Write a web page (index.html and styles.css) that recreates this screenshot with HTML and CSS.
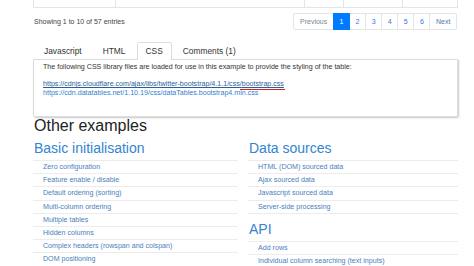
FILE: index.html
```html
<!DOCTYPE html>
<html lang="en">
<head>
  <meta charset="UTF-8">
  <meta name="viewport" content="width=device-width, initial-scale=1.0">
  <title>DataTables example - Bootstrap 4</title>
  <link rel="stylesheet" href="styles.css">
</head>
<body>
  <div class="page">
    <div class="table_tail">
      <div class="cell"></div>
      <div class="cell"></div>
      <div class="cell"></div>
      <div class="cell"></div>
      <div class="cell"></div>
    </div>

    <div class="info_row">
      <div class="info">Showing 1 to 10 of 57 entries</div>
      <ul class="pagination">
        <li class="disabled">Previous</li>
        <li class="active">1</li>
        <li>2</li>
        <li>3</li>
        <li>4</li>
        <li>5</li>
        <li>6</li>
        <li>Next</li>
      </ul>
    </div>

    <ul class="tabs">
      <li>Javascript</li>
      <li>HTML</li>
      <li class="active">CSS</li>
      <li>Comments (1)</li>
    </ul>
    <div class="tab_box">
      <p class="lead">The following CSS library files are loaded for use in this example to provide the styling of the table:</p>
      <ul class="libs">
        <li><a class="hover" href="#">https://cdnjs.cloudflare.com/ajax/libs/twitter-bootstrap/4.1.1/css/<span class="mark">bootstrap.css</span></a></li>
        <li><a href="#">https://cdn.datatables.net/1.10.19/css/dataTables.bootstrap4.min.css</a></li>
      </ul>
    </div>

    <h2 class="other">Other examples</h2>
    <div class="columns">
      <div class="col">
        <h3>Basic initialisation</h3>
        <ul class="links">
          <li>Zero configuration</li>
          <li>Feature enable / disable</li>
          <li>Default ordering (sorting)</li>
          <li>Multi-column ordering</li>
          <li>Multiple tables</li>
          <li>Hidden columns</li>
          <li>Complex headers (rowspan and colspan)</li>
          <li>DOM positioning</li>
        </ul>
      </div>
      <div class="col">
        <h3>Data sources</h3>
        <ul class="links">
          <li>HTML (DOM) sourced data</li>
          <li>Ajax sourced data</li>
          <li>Javascript sourced data</li>
          <li>Server-side processing</li>
        </ul>
        <h3 class="next">API</h3>
        <ul class="links">
          <li>Add rows</li>
          <li>Individual column searching (text inputs)</li>
        </ul>
      </div>
    </div>
  </div>
</body>
</html>
```

FILE: styles.css
```css
body {
  margin: 0;
  background: #fff;
  font-family: 'Liberation Sans', Arial, sans-serif;
  color: #333;
  overflow: hidden;
}

ul {margin: 0; padding: 0; list-style: none;}

.page {
  width: 425px;
  margin-left: 33px;
}

/* end of the table above */
.table_tail {
  display: grid;
  grid-template-columns: 82px 189px 39px 59px 1fr;
  height: 7px;
  border-bottom: 1px solid #e3e6e9;
}
.table_tail .cell {border-left: 1px solid #e3e6e9;}
.table_tail .cell:last-child {border-right: 1px solid #e3e6e9;}

.info_row {
  display: flex;
  justify-content: space-between;
  align-items: center;
  margin-top: 5px;
}
.info {font-size: 7px; color: #444; padding-left: 1px;}

.pagination {display: flex; padding-right: 1px;}
.pagination li {
  height: 15px;
  line-height: 15px;
  padding: 0 5.6px;
  font-size: 7px;
  color: #2a7de1;
  border: 1px solid #e3e6e9;
  margin-left: -1px;
}
.pagination li:first-child {border-radius: 2px 0 0 2px;}
.pagination li:last-child {border-radius: 0 2px 2px 0; color: #4f78a8;}
.pagination li.disabled {color: #7d8790;}
.pagination li.active {background: #007bff; border-color: #007bff; color: #fff; position: relative;}

.tabs {
  display: flex;
  margin: 12px 0 0 1px;
  padding-left: 0;
}
.tabs li {
  height: 17px;
  line-height: 17px;
  padding: 0 9px;
  margin-right: 1px;
  font-size: 8.4px;
  color: #333;
  border: 1px solid transparent;
  border-bottom: 0;
  box-sizing: border-box;
}
.tabs li.active {
  padding: 0 8px;
  border-color: #ddd;
  border-radius: 2px 2px 0 0;
  background: #fff;
  position: relative;
  height: 18px;
  margin-bottom: -1px;
  z-index: 1;
}

.tab_box {
  height: 58px;
  box-sizing: border-box;
  border: 1px solid #dcdcdc;
  border-radius: 0 0 2px 2px;
  box-shadow: 1px 1px 2px rgba(0, 0, 0, .22);
  padding: 3px 9px 0;
  font-size: 7.1px;
}
.tab_box .lead {margin: 0; line-height: 9px; color: #333;}
.libs {margin-top: 8px;}
.libs li {line-height: 9px;}
.libs a {color: #2f7fcf; text-decoration: none;}
.libs a.hover {color: #2a5f9a; text-decoration: underline;}
.libs .mark {position: relative;}
.libs .mark::after {
  content: '';
  position: absolute;
  left: -2px;
  right: -1px;
  bottom: -2px;
  height: 1.5px;
  background: #d8202c;
}

.other {
  margin: 0;
  font-size: 16px;
  font-weight: normal;
  line-height: 18px;
  color: #222;
  padding-left: 1px;
}

.columns {
  display: grid;
  grid-template-columns: 205px 1fr;
  column-gap: 10px;
}
.col h3 {
  margin: 5px 0 4px 1px;
  font-size: 14px;
  font-weight: normal;
  line-height: 16px;
  color: #3484d0;
}
.col h3.next {margin-top: 7px;}

.links {border-bottom: 1px solid #ececec;}
.links li {
  border-top: 1px solid #ececec;
  height: 12.2px;
  line-height: 12.2px;
  padding-left: 10px;
  font-size: 7.1px;
  color: #4a80bd;
}
```
